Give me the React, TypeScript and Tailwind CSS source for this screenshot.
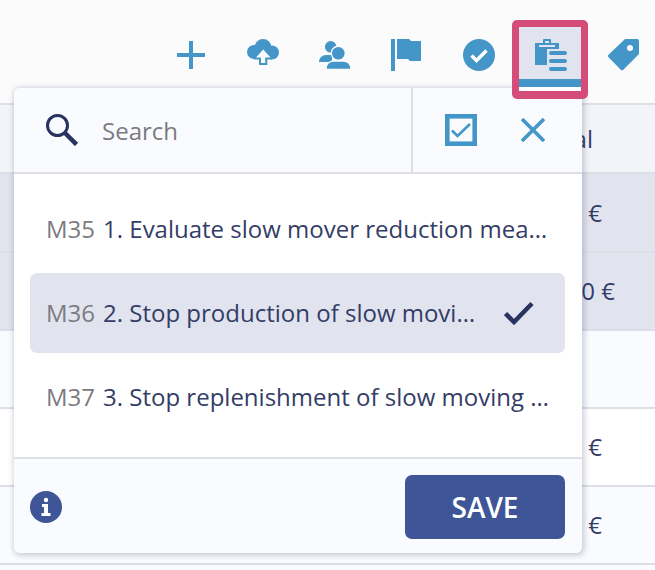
import type { ReactNode } from "react";

const BLUE = "#4396c7";

function ToolIcon({ children }: { children: ReactNode }) {
  return <div className="w-[72px] h-[32px] mt-[39px] shrink-0 flex items-center justify-center">{children}</div>;
}

const rows = [
  { text: "Total", bg: "bg-[#f3f4f9]", h: "h-[69px]", pr: "pr-[62px]" },
  { text: "€", bg: "bg-[#e1e3ee]", h: "h-[79px]", pr: "pr-[53px]" },
  { text: "0 €", bg: "bg-[#e1e3ee]", h: "h-[78px]", pr: "pr-[40px]" },
  { text: "", bg: "bg-[#fafbfe]", h: "h-[78px]", pr: "" },
  { text: "€", bg: "bg-white", h: "h-[78px]", pr: "pr-[53px]" },
  { text: "€", bg: "bg-[#fafbfe]", h: "h-[78px]", pr: "pr-[53px]" },
];

const items = [
  { code: "M35", label: "1. Evaluate slow mover reduction measures" },
  { code: "M36", label: "2. Stop production of slow moving articles", selected: true },
  { code: "M37", label: "3. Stop replenishment of slow moving articles" },
];

export default function App() {
  return (
    <div className="relative w-[655px] h-[570px] overflow-hidden bg-[#fafbfe] text-[#333d66] font-['Open_Sans',sans-serif]">
      {/* toolbar */}
      <div className="h-[105px] bg-[#fbfbfc] border-b-2 border-[#dddee6] flex items-start pl-[155px]">
        <ToolIcon>
          <svg width="28" height="28" viewBox="0 0 28 28" fill={BLUE}>
            <path d="M12 0h4v12h12v4H16v12h-4V16H0v-4h12z" />
          </svg>
        </ToolIcon>
        <ToolIcon>
          <svg className="mb-[6px]" width="32" height="26" viewBox="0 0 32 26" fill={BLUE}>
            <circle cx="7" cy="13" r="7" />
            <circle cx="16" cy="8.500" r="8.500" />
            <circle cx="25" cy="13.500" r="7" />
            <path d="M7 12h18v8.500H7z" />
            <path d="M12 18h8.300v8H12z" />
            <path d="M16.200 10.500l7.300 8h-5.300V24h-4.200v-5.500H9z" fill="#fbfbfc" />
          </svg>
        </ToolIcon>
        <ToolIcon>
          <svg width="32" height="28" viewBox="0 0 32 28" fill={BLUE}>
            <circle cx="11.700" cy="5.800" r="5.800" />
            <path d="M0 21c0-4 3-7 7-7h6v7z" />
            <circle cx="19.300" cy="12.300" r="7" stroke="#fbfbfc" strokeWidth="1.400" />
            <path d="M7 28.500c0-5 3-8.500 8-8.500h9c5 0 8 3.500 8 8.500z" stroke="#fbfbfc" strokeWidth="1.400" />
          </svg>
        </ToolIcon>
        <ToolIcon>
          <svg width="32" height="32" viewBox="0 0 32 32" fill={BLUE}>
            <path d="M0 0h4v32H0z" />
            <path d="M6 0h12l2 2h10v20H19l-2-2H6z" />
          </svg>
        </ToolIcon>
        <ToolIcon>
          <svg width="32" height="32" viewBox="0 0 32 32">
            <circle cx="16" cy="16" r="16" fill={BLUE} />
            <path d="M8.500 16.500l5 5 10-10" fill="none" stroke="#fff" strokeWidth="3.500" />
          </svg>
        </ToolIcon>
        <div className="relative z-10 w-[76px] h-[79px] mt-[20px] -ml-[3px] -mr-[1px] shrink-0 rounded-[5px] border-[7px] border-b-[8px] border-[#d44d78] bg-white flex flex-col">
          <div className="h-[52px] bg-[#e1e3ee] flex items-center justify-center pl-[2px] pt-[4px]">
            <svg width="32" height="32" viewBox="0 0 32 32" fill={BLUE}>
              <path d="M0 4h24v6H12v16H0z" />
              <path d="M8 4V1a1 1 0 0 1 1-1h6a1 1 0 0 1 1 1v3h-2V2h-4v2z" />
              <path d="M4 6h16v2H4z" fill="#e1e3ee" />
              <rect x="14" y="12" width="18" height="4" rx="2" />
              <rect x="14" y="20" width="18" height="4" rx="2" />
              <rect x="14" y="28" width="18" height="4" rx="2" />
            </svg>
          </div>
          <div className="h-[8px] bg-[#4396c7]" />
        </div>
        <ToolIcon>
          <svg className="ml-[1px]" width="32" height="32" viewBox="0 0 32 32" fill={BLUE}>
            <path
              d="M17 0h12a2 2 0 0 1 2 2v13L15.500 30.500a2 2 0 0 1-3 0L.800 18.500a2 2 0 0 1 0-3zm5 6a3 3 0 1 0 0 6 3 3 0 0 0 0-6z"
              fillRule="evenodd"
            />
          </svg>
        </ToolIcon>
      </div>

      {/* table behind the popover */}
      <div className="flex flex-col">
        {rows.map((r, i) => (
          <div
            key={i}
            className={`${r.bg} ${r.h} ${r.pr} border-b-2 border-[#dddee6] flex items-center justify-end text-[24px]`}
          >
            {r.text}
          </div>
        ))}
      </div>

      {/* popover */}
      <div className="absolute left-[14px] top-[88px] w-[568px] h-[465px] rounded-[6px] bg-white shadow-[1px_1px_5px_2px_rgba(40,50,90,0.2)] flex flex-col overflow-hidden">
        <div className="h-[86px] shrink-0 bg-[#fafbfe] border-b-2 border-[#dddee6] flex items-stretch">
          <div className="w-[399px] flex items-center pl-[32px] gap-[24px] text-[24px] text-[#7b7b80] border-r-2 border-[#dddee6]">
            <svg width="32" height="32" viewBox="0 0 32 32" fill="none" stroke="#28335f">
              <circle cx="11.500" cy="11.500" r="10" strokeWidth="3" />
              <path d="M19 19l11.500 11.500" strokeWidth="4.500" />
            </svg>
            <span className="mt-[2px]">Search</span>
          </div>
          <div className="flex items-center pl-[32px] gap-[44px]">
            <svg width="32" height="32" viewBox="0 0 32 32" fill="none" stroke={BLUE}>
              <rect x="2.300" y="2.300" width="27.400" height="27.400" strokeWidth="4.600" />
              <path d="M7 16.500l5.500 5.500L25 10" strokeWidth="2.600" />
            </svg>
            <svg width="24" height="24" viewBox="0 0 24 24" fill="none" stroke={BLUE} strokeWidth="3.600">
              <path d="M1 1l22 22M23 1L1 23" />
            </svg>
          </div>
        </div>
        <div className="flex-1 min-h-0 pl-[16px] pr-[17px] pt-[15px] flex flex-col gap-[4px] text-[24px]">
          {items.map((it) => (
            <div
              key={it.code}
              className={`h-[80px] shrink-0 flex items-center rounded-[7px] pl-[16px] ${
                it.selected ? "bg-[#e1e3ee] pr-[31px]" : "pr-[15px]"
              }`}
            >
              <span className="text-[#7b7b80] mr-[8px] shrink-0">{it.code}</span>
              <span className="truncate flex-1 min-w-0">{it.label}</span>
              {it.selected && (
                <svg className="ml-[24px] shrink-0" width="30" height="24" viewBox="0 0 30 24" fill="none" stroke="#28335f" strokeWidth="4.500">
                  <path d="M1.500 12.500l8.500 8.500L28 2.500" />
                </svg>
              )}
            </div>
          ))}
        </div>
        <div className="h-[96px] shrink-0 bg-[#fafbfe] border-t-2 border-[#dddee6] flex items-center justify-between pl-[16px] pr-[17px] pt-[2px]">
          <svg width="32" height="32" viewBox="0 0 32 32">
            <circle cx="16" cy="16" r="16" fill="#3e5698" />
            <circle cx="16" cy="9" r="2.200" fill="#fff" />
            <path d="M12 13h6v9h2.500v3h-9v-3H14v-6h-2z" fill="#fff" />
          </svg>
          <button className="w-[160px] h-[64px] rounded-[7px] bg-[#3e5698] text-white text-[28px] font-semibold">SAVE</button>
        </div>
      </div>
    </div>
  );
}
